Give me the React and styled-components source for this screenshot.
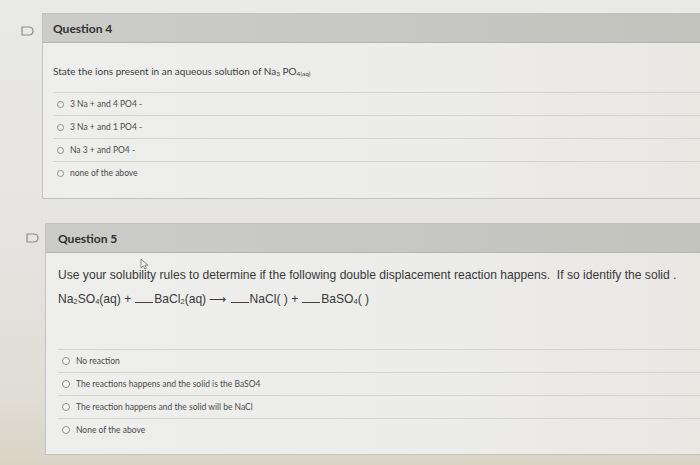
import React from "react";
import styled, { createGlobalStyle } from "styled-components";

const Global = createGlobalStyle`
  html, body { margin: 0; padding: 0; }
  body { font-family: Lato, "Noto Sans", sans-serif; }
`;

const Page = styled.div`
  position: relative;
  width: 700px;
  height: 465px;
  overflow: hidden;
  background: linear-gradient(180deg, #e9e9e8 0%, #e6e5e2 45%, #e0ddd5 85%, #d9d3c5 100%);
  display: flex;
  flex-direction: column;
  padding-top: 13px;
  box-sizing: border-box;
`;

const QuestionRow = styled.div`
  display: flex;
  align-items: flex-start;
  margin-top: ${(p) => p.$gap}px;
  padding-left: ${(p) => p.$indent}px;
`;

const FlagCol = styled.div`
  width: ${(p) => p.$w}px;
  flex: none;
  display: flex;
  justify-content: flex-end;
  padding-right: ${(p) => p.$right}px;
  padding-top: ${(p) => p.$top}px;
  box-sizing: border-box;
`;

const Card = styled.section`
  flex: 1;
  margin-right: -20px;
  border: 1px solid #c2c2be;
  background: linear-gradient(90deg, #eeeeec 0%, #ececea 60%, #e9e7e2 100%);
  box-sizing: border-box;
`;

const Header = styled.header`
  height: ${(p) => p.$h}px;
  background: linear-gradient(90deg, #cbccc8 0%, #c6c7c2 60%, #c3c3bd 100%);
  border-bottom: 1px solid #b3b4ae;
  box-sizing: border-box;
  display: flex;
  align-items: center;
  padding-left: ${(p) => p.$pad}px;
  font-family: Lato, sans-serif;
  font-weight: 700;
  font-size: 12px;
  color: #2e2f2f;
`;

const Body = styled.div`
  position: relative;
  padding: ${(p) => p.$top}px 0 ${(p) => p.$bottom}px ${(p) => p.$pad}px;
`;

const Prompt = styled.div`
  font-family: Lato, sans-serif;
  font-size: 10px;
  line-height: 12px;
  height: 12px;
  color: #3d3d3d;
  white-space: nowrap;
  sub { font-size: 6.5px; line-height: 0; vertical-align: -1px; }
`;

const BigPrompt = styled.div`
  font-family: "Liberation Sans", Arial, sans-serif;
  font-size: 12.1px;
  line-height: 16px;
  height: 16px;
  color: #383838;
  margin-top: ${(p) => p.$mt || 0}px;
  white-space: nowrap;
  sub { font-size: 7.5px; line-height: 0; vertical-align: -1px; }
`;

const Options = styled.ul`
  list-style: none;
  margin: ${(p) => p.$mt}px 0 0 0;
  padding: 0;
`;

const Option = styled.li`
  height: ${(p) => p.$h}px;
  border-top: 1px solid #d3d3cf;
  box-sizing: border-box;
  display: flex;
  align-items: center;
  gap: ${(p) => p.$gap}px;
  padding-left: ${(p) => p.$pl}px;
  font-family: Lato, sans-serif;
  font-size: 8.5px;
  color: #4a4a4a;
`;

const Radio = styled.span`
  width: ${(p) => p.$size}px;
  height: ${(p) => p.$size}px;
  border-radius: 50%;
  border: 1px solid #8e8e8c;
  background: #f4f4f3;
  box-sizing: border-box;
  flex: none;
`;

const Blank = styled.span`
  display: inline-block;
  width: 18px;
  border-bottom: 1px solid #444;
  margin: 0 1px 0 4px;
  height: 10px;
  vertical-align: baseline;
`;

const Cursor = styled.svg`
  position: absolute;
  left: 94px;
  top: 5px;
`;

const Flag = () => (
  <svg width="13" height="10" viewBox="0 0 13 10">
    <path
      d="M1 1 H7.5 Q12 1 12 5 Q12 9 7.5 9 H1 Z"
      fill="none"
      stroke="#8c8c8a"
      strokeWidth="1.2"
      strokeLinejoin="round"
    />
  </svg>
);

const q4Options = ["3 Na + and 4 PO4 -", "3 Na + and 1 PO4 -", "Na 3 + and PO4 -", "none of the above"];
const q5Options = [
  "No reaction",
  "The reactions happens and the solid is the BaSO4",
  "The reaction happens and the solid will be NaCl",
  "None of the above",
];

export default function App() {
  return (
    <>
      <Global />
      <Page>
        <QuestionRow $gap={0} $indent={0}>
          <FlagCol $w={42} $right={8} $top={13}>
            <Flag />
          </FlagCol>
          <Card>
            <Header $h={29} $pad={10}>Question 4</Header>
            <Body $top={22} $bottom={14} $pad={10}>
              <Prompt>
                State the ions present in an aqueous solution of Na<sub>3</sub> PO<sub>4(aq)</sub>
              </Prompt>
              <Options $mt={15}>
                {q4Options.map((o) => (
                  <Option key={o} $h={23} $gap={6} $pl={4}>
                    <Radio $size={7} />
                    {o}
                  </Option>
                ))}
              </Options>
            </Body>
          </Card>
        </QuestionRow>

        <QuestionRow $gap={24} $indent={3}>
          <FlagCol $w={42} $right={6} $top={10}>
            <Flag />
          </FlagCol>
          <Card>
            <Header $h={29} $pad={12}>Question 5</Header>
            <Body $top={14} $bottom={13} $pad={12}>
              <Cursor width="9" height="12" viewBox="0 0 9 12">
                <path d="M1 1 L1 10 L3.3 7.8 L5 11 L6.4 10.3 L4.8 7.2 L8 7.2 Z" fill="#fff" stroke="#777" strokeWidth="0.9" />
              </Cursor>
              <BigPrompt>
                Use your solubility rules to determine if the following double displacement reaction happens.&nbsp; If so identify the solid .
              </BigPrompt>
              <BigPrompt $mt={8}>
                Na<sub>2</sub>SO<sub>4</sub>(aq) +<Blank />BaCl<sub>2</sub>(aq) ⟶<Blank />NaCl( ) +<Blank />BaSO<sub>4</sub>( )
              </BigPrompt>
              <Options $mt={42}>
                {q5Options.map((o) => (
                  <Option key={o} $h={23} $gap={6} $pl={4}>
                    <Radio $size={8} />
                    {o}
                  </Option>
                ))}
              </Options>
            </Body>
          </Card>
        </QuestionRow>
      </Page>
    </>
  );
}
